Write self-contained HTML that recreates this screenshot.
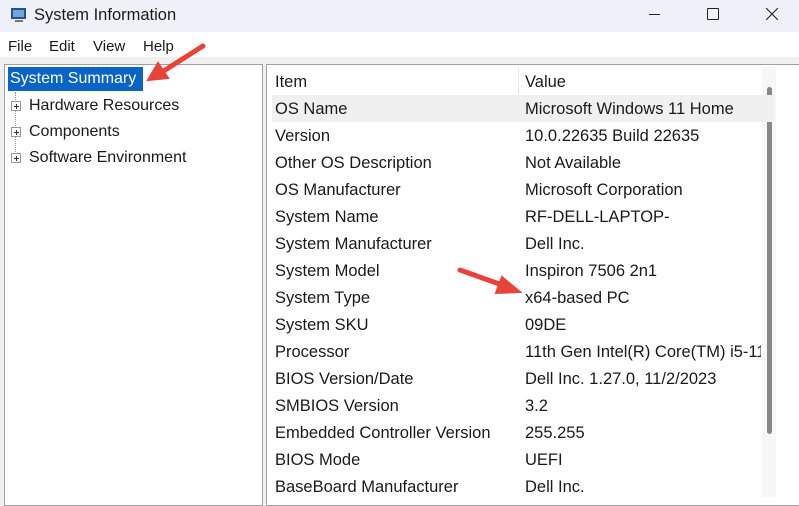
<!DOCTYPE html><html><head><style>
body{margin:0;width:799px;height:493px;overflow:hidden;background:#f0f0f0;font-family:"Liberation Sans",sans-serif;color:#1a1a1a;position:relative}
.t{position:absolute;white-space:nowrap;font-size:16.5px}
#title{position:absolute;left:0;top:0;width:799px;height:32px;background:#eef1f7}
#menu{position:absolute;left:0;top:32px;width:799px;height:25px;background:#fff}
#lp{position:absolute;left:4px;top:64px;width:257px;height:440px;background:#fff;border:1px solid #a0a0a0}
#rp{position:absolute;left:266px;top:64px;width:540px;height:440px;background:#fff;border:1px solid #a0a0a0}
.row{position:absolute;left:272px;width:502px;height:27px}
.hl{background:#f0f0f0}
.pl{position:absolute;width:8px;height:8px;border:1px solid #999;background:#fff;font-size:0}
.pl:before{content:"";position:absolute;left:2px;top:4px;width:5px;height:1px;background:#333}
.pl:after{content:"";position:absolute;left:4px;top:2px;width:1px;height:5px;background:#333}
</style></head><body>
<div id="title"></div>
<svg style="position:absolute;left:10px;top:6px" width="18" height="18"><rect x="1" y="2" width="15" height="11" fill="#2a4f8f"/><rect x="3" y="4" width="11" height="7" fill="#6fa7e0"/><rect x="5" y="14" width="8" height="2" fill="#777"/></svg>
<div class="t" style="left:34px;top:6px">System Information</div>
<div style="position:absolute;left:649px;top:14px;width:11px;height:1px;background:#222"></div>
<div style="position:absolute;left:707px;top:8px;width:10px;height:10px;border:1px solid #222;border-radius:1px"></div>
<svg style="position:absolute;left:766px;top:8px" width="12" height="12"><path d="M0 0L12 12M12 0L0 12" stroke="#222" stroke-width="1.1"/></svg>
<div id="menu"></div>
<div class="t" style="left:8px;top:38px;font-size:15px">File</div>
<div class="t" style="left:49px;top:38px;font-size:15px">Edit</div>
<div class="t" style="left:93px;top:38px;font-size:15px">View</div>
<div class="t" style="left:143px;top:38px;font-size:15px">Help</div>
<div id="lp"></div>
<div style="position:absolute;left:8px;top:67px;width:135px;height:24px;background:#0a64c8"></div>
<div class="t" style="left:10px;top:70px;color:#fff;font-size:16px">System Summary</div>
<div style="position:absolute;left:15px;top:92px;height:66px;border-left:1px dotted #999"></div>
<div class="pl" style="left:11px;top:101px"></div><div class="t" style="left:29px;top:97px;font-size:16px">Hardware Resources</div>
<div class="pl" style="left:11px;top:127px"></div><div class="t" style="left:29px;top:123px;font-size:16px">Components</div>
<div class="pl" style="left:11px;top:153px"></div><div class="t" style="left:29px;top:149px;font-size:16px">Software Environment</div>
<div id="rp"></div>
<div style="position:absolute;left:518px;top:67px;width:1px;height:27px;background:#e5e5e5"></div>
<div class="t" style="left:275px;top:73px">Item</div><div class="t" style="left:525px;top:73px">Value</div>
<div style="position:absolute;left:762px;top:67px;width:14px;height:430px;background:#f7f7f7"></div>
<div style="position:absolute;left:767px;top:87px;width:5px;height:347px;background:#888;border-radius:3px"></div>
<div class="row hl" style="top:95px"></div>
<div id="rows"></div>
<script>
var d=[["OS Name","Microsoft Windows 11 Home"],["Version","10.0.22635 Build 22635"],["Other OS Description","Not Available"],["OS Manufacturer","Microsoft Corporation"],["System Name","RF-DELL-LAPTOP-"],["System Manufacturer","Dell Inc."],["System Model","Inspiron 7506 2n1"],["System Type","x64-based PC"],["System SKU","09DE"],["Processor","11th Gen Intel(R) Core(TM) i5-1135G7"],["BIOS Version/Date","Dell Inc. 1.27.0, 11/2/2023"],["SMBIOS Version","3.2"],["Embedded Controller Version","255.255"],["BIOS Mode","UEFI"],["BaseBoard Manufacturer","Dell Inc."]];
var h="";d.forEach(function(r,i){var y=100+27*i;h+='<div class="t" style="left:275px;top:'+y+'px">'+r[0]+'</div><div class="t" style="left:525px;top:'+y+'px;max-width:236px;overflow:hidden">'+r[1]+'</div>';});
document.getElementById("rows").innerHTML=h;
</script>
<svg style="position:absolute;left:0;top:0" width="799" height="493">
<g stroke="#e8433a" stroke-width="5" stroke-linecap="round" fill="#e8433a">
<line x1="203" y1="46" x2="162" y2="72"/><polygon points="148,80 158,63 168,78" stroke-width="2"/>
<line x1="460" y1="270" x2="505" y2="286"/><polygon points="520,292 502,277 496,293" stroke-width="2"/>
</g></svg>
</body></html>
